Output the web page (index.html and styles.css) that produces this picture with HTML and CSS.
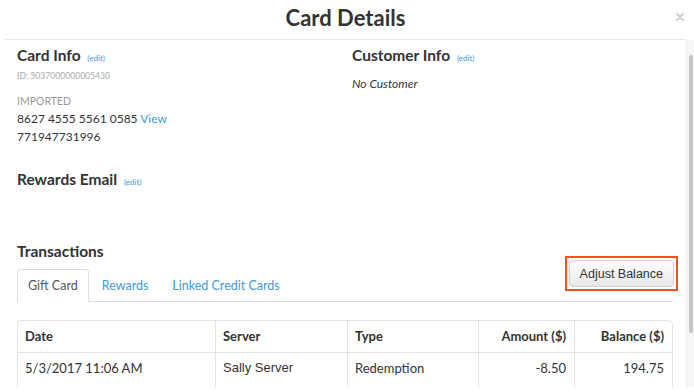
FILE: index.html
```html
<!DOCTYPE html>
<html>
<head>
<meta charset="utf-8">
<title>Card Details</title>
<link rel="stylesheet" href="styles.css">
</head>
<body>
<div class="modal">
  <header class="modal-header">
    <h1 class="modal-title">Card Details</h1>
    <button class="close" aria-label="Close">
      <svg width="8" height="8" viewBox="0 0 8 8"><path d="M1 1L7 7M7 1L1 7" stroke="#c4c4c4" stroke-width="1.7" stroke-linecap="round"/></svg>
    </button>
  </header>
  <div class="modal-body">
    <div class="content">
      <div class="info-grid">
        <section class="info">
          <h2 class="heading">Card Info <a class="edit">(edit)</a></h2>
          <div class="card-id">ID: 5037000000005430</div>
          <div class="label">IMPORTED</div>
          <div class="value">8627 4555 5561 0585 <a class="link">View</a></div>
          <div class="value">771947731996</div>
        </section>
        <section class="info">
          <h2 class="heading">Customer Info <a class="edit">(edit)</a></h2>
          <div class="no-customer">No Customer</div>
        </section>
      </div>
      <h2 class="heading rewards">Rewards Email <a class="edit">(edit)</a></h2>
      <h2 class="heading transactions">Transactions</h2>
      <div class="tab-bar">
        <ul class="tabs">
          <li class="tab active">Gift Card</li>
          <li class="tab">Rewards</li>
          <li class="tab">Linked Credit Cards</li>
        </ul>
        <div class="highlight"><button class="btn-adjust">Adjust Balance</button></div>
      </div>
      <table class="tx-table">
        <colgroup>
          <col class="c-date"><col class="c-server"><col class="c-type"><col class="c-amount"><col>
        </colgroup>
        <thead>
          <tr><th>Date</th><th>Server</th><th>Type</th><th class="num">Amount ($)</th><th class="num">Balance ($)</th></tr>
        </thead>
        <tbody>
          <tr><td>5/3/2017 11:06 AM</td><td class="server">Sally Server</td><td>Redemption</td><td class="num">-8.50</td><td class="num">194.75</td></tr>
        </tbody>
      </table>
    </div>
    <div class="scrollbar"><div class="thumb"></div></div>
  </div>
</div>
</body>
</html>
```

FILE: styles.css
```css
* { box-sizing: border-box; }
html, body { margin: 0; padding: 0; background: #fff; }
body {
  font-family: Lato, "Noto Sans", sans-serif;
  color: #333;
  width: 694px;
  height: 392px;
  overflow: hidden;
}
.modal { display: flex; flex-direction: column; }
.modal-header {
  position: relative;
  height: 40px;
  margin: 0 8px 0 5px;
  border-bottom: 1px solid #e8e8e8;
  display: flex;
  justify-content: center;
}
.modal-title {
  margin: 0;
  font-size: 22px;
  font-weight: 700;
  line-height: 36px;
  color: #333;
}
.close {
  position: absolute;
  right: 2px;
  top: 13px;
  border: 0;
  background: none;
  padding: 0;
  width: 8px;
  height: 8px;
  display: flex;
}
.modal-body {
  display: flex;
  height: 347px;
  overflow: hidden;
}
.content {
  flex: 1;
  padding: 5px 13px 0 17px;
}
.scrollbar {
  width: 8px;
  background: #f6f6f6;
  border-left: 1px solid #ececec;
  padding-top: 15px;
}
.thumb {
  margin-left: 2px;
  width: 4px;
  height: 278px;
  background: #c6c6c6;
  border-radius: 3px;
}
.info-grid {
  display: grid;
  grid-template-columns: 335px 1fr;
}
.heading {
  margin: 0;
  font-size: 15.5px;
  font-weight: 700;
  line-height: 20px;
  color: #333;
}
.edit {
  font-size: 8px;
  font-weight: 400;
  color: #3d9ad9;
  margin-left: 3px;
}
.link { color: #3d9ad9; }
.card-id {
  margin-top: 2px;
  font-size: 8.6px;
  line-height: 12px;
  color: #aaa;
}
.label {
  margin-top: 10px;
  font-size: 10.5px;
  line-height: 18px;
  color: #999;
}
.value {
  font-size: 12px;
  line-height: 18px;
  color: #333;
}
.no-customer {
  margin-top: 7px;
  font-size: 12px;
  line-height: 18px;
  font-style: italic;
}
.rewards { margin-top: 23px; }
.transactions { margin-top: 50px; line-height: 18px; }
.tab-bar {
  display: flex;
  justify-content: space-between;
  align-items: flex-end;
  border-bottom: 1px solid #ddd;
}
.tabs {
  list-style: none;
  margin: 0;
  padding: 0;
  display: flex;
}
.tab {
  font-size: 12.5px;
  line-height: 18px;
  padding: 7px 10px 6px;
  border: 1px solid transparent;
  border-bottom: 0;
  margin-right: 2px;
  margin-bottom: -1px;
  color: #3d9ad9;
  border-radius: 4px 4px 0 0;
}
.tab.active {
  color: #555;
  border-color: #ddd;
  background: #fff;
  padding-bottom: 7px;
}
.highlight {
  border: 2px solid #f2531c;
  padding: 2px;
  margin: -4px -5px 10px 0;
  display: flex;
}
.btn-adjust {
  font-family: "Liberation Sans", Arial, sans-serif;
  font-size: 12.5px;
  color: #333;
  height: 27px;
  padding: 0 10px;
  background: linear-gradient(#ffffff, #e8e8e8);
  border: 1px solid #cfcfcf;
  border-radius: 4px;
}
.tx-table {
  margin-top: 18px;
  width: 100%;
  table-layout: fixed;
  border-collapse: separate;
  border-spacing: 0;
  border: 1px solid #e3e3e3;
  border-radius: 4px 4px 0 0;
  font-size: 13px;
}
.c-date { width: 197px; }
.c-server { width: 132px; }
.c-type { width: 131px; }
.c-amount { width: 96px; }
.tx-table th, .tx-table td {
  text-align: left;
  padding: 6px 8px 7px 7px;
  line-height: 18px;
  border-left: 1px solid #e3e3e3;
  border-bottom: 1px solid #e3e3e3;
  color: #333;
  white-space: nowrap;
}
.tx-table tbody td { padding-bottom: 20px; }
.tx-table th:first-child, .tx-table td:first-child { border-left: 0; }
.tx-table th { font-weight: 700; }
.tx-table .num { text-align: right; }
.tx-table td.server {
  font-family: "Liberation Sans", Arial, sans-serif;
  font-size: 13px;
}
```
